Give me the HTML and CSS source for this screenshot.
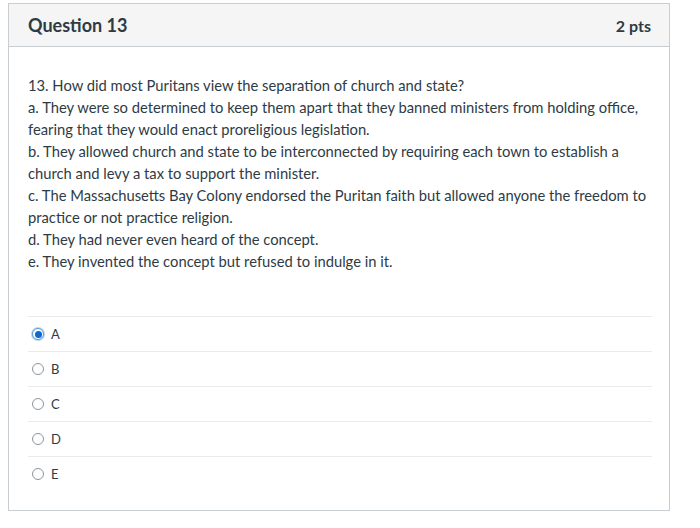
FILE: index.html
```html
<!DOCTYPE html>
<html>
<head>
<meta charset="utf-8">
<link rel="stylesheet" href="styles.css">
</head>
<body>
<div class="card">
  <div class="header">
    <div class="title">Question 13</div>
    <div class="pts">2 pts</div>
  </div>
  <div class="body">
    <div class="question">
      <p>13. How did most Puritans view the separation of church and state?</p>
      <p>a. They were so determined to keep them apart that they banned ministers from holding office, fearing that they would enact proreligious legislation.</p>
      <p>b. They allowed church and state to be interconnected by requiring each town to establish a church and levy a tax to support the minister.</p>
      <p>c. The Massachusetts Bay Colony endorsed the Puritan faith but allowed anyone the freedom to practice or not practice religion.</p>
      <p>d. They had never even heard of the concept.</p>
      <p>e. They invented the concept but refused to indulge in it.</p>
    </div>
    <div class="answers">
      <div class="answer"><span class="radio checked"></span><span class="label">A</span></div>
      <div class="answer"><span class="radio"></span><span class="label">B</span></div>
      <div class="answer"><span class="radio"></span><span class="label">C</span></div>
      <div class="answer"><span class="radio"></span><span class="label">D</span></div>
      <div class="answer"><span class="radio"></span><span class="label">E</span></div>
    </div>
  </div>
</div>
</body>
</html>
```

FILE: styles.css
```css
html, body {
  margin: 0;
  padding: 0;
  background: #fff;
}
body {
  padding: 3px 0 0 8px;
  font-family: Lato, "Open Sans", sans-serif;
  color: #2d3b45;
}
.card {
  width: 662px;
  border: 1px solid #c7cdd1;
  box-sizing: border-box;
  height: 508px;
}
.header {
  display: flex;
  justify-content: space-between;
  align-items: center;
  height: 42px;
  background: #f5f5f5;
  border-bottom: 1px solid #c7cdd1;
  padding: 0 18px 0 19px;
}
.title {
  font-size: 18px;
  font-weight: bold;
}
.pts {
  font-size: 16px;
  font-weight: bold;
}
.body {
  padding: 27px 17px 0 19px;
}
.question {
  font-size: 14.75px;
  line-height: 22px;
}
.question p {
  margin: 0;
}
.answers {
  margin-top: 44px;
}
.answer {
  display: flex;
  align-items: center;
  height: 34px;
  border-top: 1px solid #e8eaec;
  padding-left: 4px;
}
.radio {
  width: 12px;
  height: 12px;
  border: 1px solid #8b969e;
  border-radius: 50%;
  box-sizing: border-box;
  margin-right: 7px;
  position: relative;
}
.radio.checked {
  border: 1px solid #5a9bd8;
  box-shadow: 0 0 0 1px #b9d4ef;
  background: #fff;
}
.radio.checked::after {
  content: "";
  position: absolute;
  left: 1.5px;
  top: 1.5px;
  width: 7px;
  height: 7px;
  border-radius: 50%;
  background: #0b6ad0;
}
.label {
  font-size: 13px;
  color: #2d3b45;
}
```
